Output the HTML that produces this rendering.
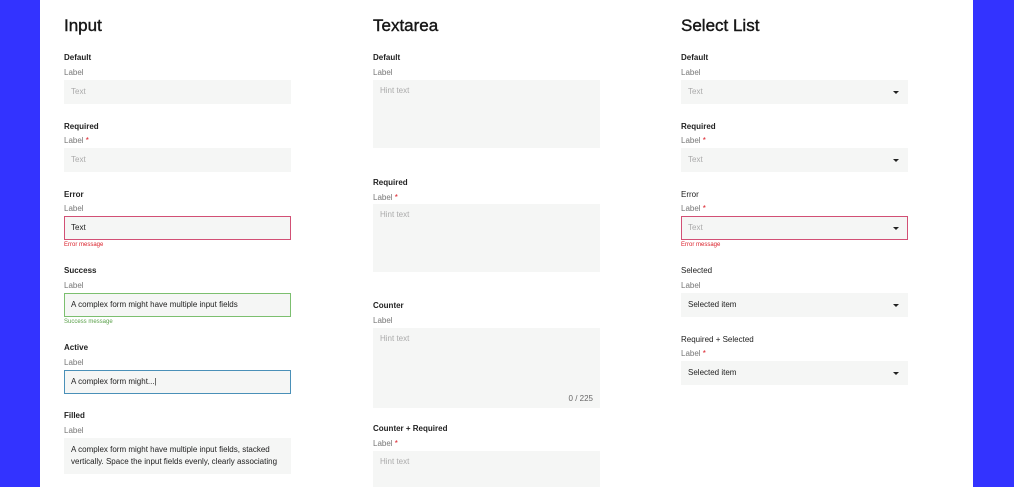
<!DOCTYPE html>
<html><head><meta charset="utf-8"><style>
*{margin:0;padding:0;box-sizing:border-box}
html,body{width:1014px;height:487px;overflow:hidden}
body{background:#fff;font-family:"Liberation Sans",sans-serif;position:relative;color:#171717}
.bl{position:absolute;top:0;bottom:0;background:#3333ff}
.a{position:absolute;white-space:nowrap}
h1{position:absolute;font-size:17px;font-weight:normal;color:#161616;-webkit-text-stroke:0.4px #161616}
.t{font-size:8px;font-weight:bold;color:#222}
.l{font-size:8px;color:#777}
.l b{color:#da1e28;font-weight:normal}
.f{position:absolute;width:227px;height:24px;background:#f5f6f5;font-size:8px;color:#aaa;padding:0 6px;line-height:22px;border:1px solid transparent;overflow:hidden}
.f.v{color:#222}
.err{border-color:#d25075}
.ok{border-color:#7cbf6f}
.act{border-color:#4a90b8}
.m{font-size:6px}
.car{position:absolute;right:8px;top:10px;width:0;height:0;border-left:3px solid transparent;border-right:3px solid transparent;border-top:3px solid #222}
</style></head><body>
<div class="bl" style="left:0;width:40px"></div>
<div class="bl" style="left:973px;width:41px"></div>

<h1 style="left:64px;top:16px">Input</h1>
<h1 style="left:373px;top:16px">Textarea</h1>
<h1 style="left:681px;top:16px">Select List</h1>

<div class="a t" style="left:64px;top:53px">Default</div>
<div class="a l" style="left:64px;top:68px">Label</div>
<div class="f" style="left:64px;top:80px">Text</div>

<div class="a t" style="left:64px;top:122px">Required</div>
<div class="a l" style="left:64px;top:136px">Label <b>*</b></div>
<div class="f" style="left:64px;top:148px">Text</div>

<div class="a t" style="left:64px;top:190px">Error</div>
<div class="a l" style="left:64px;top:204px">Label</div>
<div class="f v err" style="left:64px;top:216px">Text</div>
<div class="a m" style="left:64px;top:242px;color:#da1e28">Error message</div>

<div class="a t" style="left:64px;top:266px">Success</div>
<div class="a l" style="left:64px;top:281px">Label</div>
<div class="f v ok" style="left:64px;top:293px">A complex form might have multiple input fields</div>
<div class="a m" style="left:64px;top:319px;color:#5aa04a">Success message</div>

<div class="a t" style="left:64px;top:343px">Active</div>
<div class="a l" style="left:64px;top:358px">Label</div>
<div class="f v act" style="left:64px;top:370px">A complex form might...|</div>

<div class="a t" style="left:64px;top:411px">Filled</div>
<div class="a l" style="left:64px;top:426px">Label</div>
<div class="f v" style="left:64px;top:438px;height:36px;line-height:12px;padding-top:5px;white-space:normal">A complex form might have multiple input fields, stacked vertically. Space the input fields evenly, clearly associating</div>

<div class="a t" style="left:373px;top:53px">Default</div>
<div class="a l" style="left:373px;top:68px">Label</div>
<div class="f" style="left:373px;top:80px;height:68px;line-height:20px">Hint text</div>

<div class="a t" style="left:373px;top:178px">Required</div>
<div class="a l" style="left:373px;top:193px">Label <b>*</b></div>
<div class="f" style="left:373px;top:204px;height:68px;line-height:20px">Hint text</div>

<div class="a t" style="left:373px;top:301px">Counter</div>
<div class="a l" style="left:373px;top:316px">Label</div>
<div class="f" style="left:373px;top:328px;height:80px;line-height:20px">Hint text<span class="a" style="right:6px;top:60px;color:#666">0 / 225</span></div>

<div class="a t" style="left:373px;top:424px">Counter + Required</div>
<div class="a l" style="left:373px;top:439px">Label <b>*</b></div>
<div class="f" style="left:373px;top:451px;height:50px;line-height:20px">Hint text</div>

<div class="a t" style="left:681px;top:53px">Default</div>
<div class="a l" style="left:681px;top:68px">Label</div>
<div class="f" style="left:681px;top:80px">Text<i class="car"></i></div>

<div class="a t" style="left:681px;top:122px">Required</div>
<div class="a l" style="left:681px;top:136px">Label <b>*</b></div>
<div class="f" style="left:681px;top:148px">Text<i class="car"></i></div>

<div class="a t" style="left:681px;top:190px;font-weight:normal">Error</div>
<div class="a l" style="left:681px;top:204px">Label <b>*</b></div>
<div class="f err" style="left:681px;top:216px">Text<i class="car"></i></div>
<div class="a m" style="left:681px;top:242px;color:#da1e28">Error message</div>

<div class="a t" style="left:681px;top:266px;font-weight:normal">Selected</div>
<div class="a l" style="left:681px;top:281px">Label</div>
<div class="f v" style="left:681px;top:293px">Selected item<i class="car"></i></div>

<div class="a t" style="left:681px;top:335px;font-weight:normal">Required + Selected</div>
<div class="a l" style="left:681px;top:349px">Label <b>*</b></div>
<div class="f v" style="left:681px;top:361px">Selected item<i class="car"></i></div>
</body></html>
